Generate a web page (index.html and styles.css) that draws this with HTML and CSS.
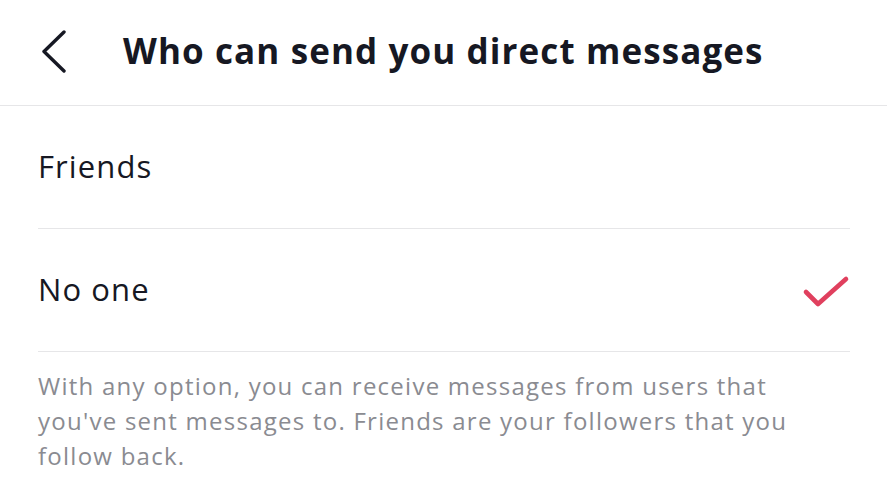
FILE: index.html
```html
<!DOCTYPE html>
<html lang="en">
<head>
<meta charset="utf-8">
<title>Who can send you direct messages</title>
<link rel="stylesheet" href="styles.css">
</head>
<body>
<div class="screen">
  <header class="topbar">
    <button class="back" aria-label="Back">
      <svg width="30" height="44" viewBox="0 0 30 44"><polyline points="25,3 5,22.5 25,42" fill="none" stroke="#161823" stroke-width="3.4" stroke-linecap="round" stroke-linejoin="round"/></svg>
    </button>
    <h1 class="title">Who can send you direct messages</h1>
  </header>
  <main class="content">
    <div class="option">
      <span class="label">Friends</span>
    </div>
    <div class="option">
      <span class="label">No one</span>
      <svg class="check" width="48" height="34" viewBox="0 0 48 34"><polyline points="4,17 16,29 44,4" fill="none" stroke="#e0405e" stroke-width="4.6" stroke-linecap="round" stroke-linejoin="round"/></svg>
    </div>
    <p class="note">With any option, you can receive messages from users that you've sent messages to. Friends are your followers that you follow back.</p>
  </main>
</div>
</body>
</html>
```
FILE: styles.css
```css
html, body {
  margin: 0;
  padding: 0;
  background: #ffffff;
}
body {
  font-family: "Open Sans", "Liberation Sans", sans-serif;
  color: #161823;
}
.screen {
  width: 887px;
  height: 498px;
  overflow: hidden;
}
.topbar {
  height: 106px;
  box-sizing: border-box;
  border-bottom: 1px solid #e6e6e8;
  display: flex;
  align-items: center;
  padding-left: 39px;
}
.back {
  border: 0;
  background: none;
  padding: 0;
  width: 30px;
  height: 44px;
  margin-right: 54px;
  display: flex;
  margin-top: -4px;
}
.title {
  margin: 0;
  font-size: 35px;
  font-weight: 700;
  letter-spacing: 1.1px;
  color: #161823;
  margin-top: -4px;
}
.content {
  padding: 0 37px 0 38px;
}
.option {
  height: 122px;
  border-bottom: 1px solid #e6e6e8;
  display: flex;
  align-items: center;
  justify-content: space-between;
}
.label {
  font-size: 31px;
  letter-spacing: 1.1px;
  color: #161823;
  margin-top: -3px;
}
.check {
  margin-top: 3px;
}
.note {
  margin: 16px 0 0 0;
  font-size: 24px;
  letter-spacing: 1.25px;
  line-height: 35px;
  color: #8a8b91;
  max-width: 770px;
}
```
